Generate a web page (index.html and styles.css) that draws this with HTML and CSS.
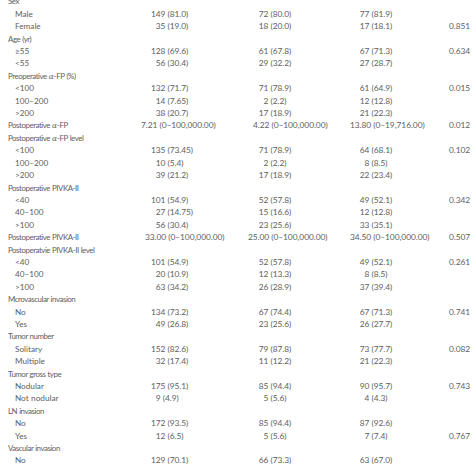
FILE: index.html
```html
<!DOCTYPE html>
<html>
<head>
<meta charset="utf-8">
<link rel="stylesheet" href="styles.css">
</head>
<body>
<div class="table">
  <div class="row"><div class="lab">Sex</div></div>
  <div class="row"><div class="lab sub">Male</div><div class="c2">149 (81.0)</div><div class="c3">&#8199;72 (80.0)</div><div class="c4">&#8199;77 (81.9)</div><div class="c5"></div></div>
  <div class="row"><div class="lab sub">Female</div><div class="c2">&#8199;35 (19.0)</div><div class="c3">&#8199;18 (20.0)</div><div class="c4">&#8199;17 (18.1)</div><div class="c5">0.851</div></div>
  <div class="row"><div class="lab">Age (yr)</div></div>
  <div class="row"><div class="lab sub">≥55</div><div class="c2">128 (69.6)</div><div class="c3">&#8199;61 (67.8)</div><div class="c4">&#8199;67 (71.3)</div><div class="c5">0.634</div></div>
  <div class="row"><div class="lab sub">&lt;55</div><div class="c2">&#8199;56 (30.4)</div><div class="c3">&#8199;29 (32.2)</div><div class="c4">&#8199;27 (28.7)</div><div class="c5"></div></div>
  <div class="row"><div class="lab">Preoperative <span class="gr">α</span>-FP (%)</div></div>
  <div class="row"><div class="lab sub">&lt;100</div><div class="c2">132 (71.7)</div><div class="c3">&#8199;71 (78.9)</div><div class="c4">&#8199;61 (64.9)</div><div class="c5">0.015</div></div>
  <div class="row"><div class="lab sub">100–200</div><div class="c2">&#8199;14 (7.65)</div><div class="c3">&#8199;&#8199;2 (2.2)</div><div class="c4">&#8199;12 (12.8)</div><div class="c5"></div></div>
  <div class="row"><div class="lab sub">&gt;200</div><div class="c2">&#8199;38 (20.7)</div><div class="c3">&#8199;17 (18.9)</div><div class="c4">&#8199;21 (22.3)</div><div class="c5"></div></div>
  <div class="row"><div class="lab">Postoperative <span class="gr">α</span>-FP</div><div class="c2 med-a">7.21 (0–100,000.00)</div><div class="c3 med-b">4.22 (0–100,000.00)</div><div class="c4 med">13.80 (0–19,716.00)</div><div class="c5">0.012</div></div>
  <div class="row"><div class="lab">Postoperative <span class="gr">α</span>-FP level</div></div>
  <div class="row"><div class="lab sub">&lt;100</div><div class="c2">135 (73.45)</div><div class="c3">&#8199;71 (78.9)</div><div class="c4">&#8199;64 (68.1)</div><div class="c5">0.102</div></div>
  <div class="row"><div class="lab sub">100–200</div><div class="c2">&#8199;10 (5.4)</div><div class="c3">&#8199;&#8199;2 (2.2)</div><div class="c4">&#8199;&#8199;8 (8.5)</div><div class="c5"></div></div>
  <div class="row"><div class="lab sub">&gt;200</div><div class="c2">&#8199;39 (21.2)</div><div class="c3">&#8199;17 (18.9)</div><div class="c4">&#8199;22 (23.4)</div><div class="c5"></div></div>
  <div class="row"><div class="lab">Postoperative PIVKA-II</div></div>
  <div class="row"><div class="lab sub">&lt;40</div><div class="c2">101 (54.9)</div><div class="c3">&#8199;52 (57.8)</div><div class="c4">&#8199;49 (52.1)</div><div class="c5">0.342</div></div>
  <div class="row"><div class="lab sub">40–100</div><div class="c2">&#8199;27 (14.75)</div><div class="c3">&#8199;15 (16.6)</div><div class="c4">&#8199;12 (12.8)</div><div class="c5"></div></div>
  <div class="row"><div class="lab sub">&gt;100</div><div class="c2">&#8199;56 (30.4)</div><div class="c3">&#8199;23 (25.6)</div><div class="c4">&#8199;33 (35.1)</div><div class="c5"></div></div>
  <div class="row"><div class="lab">Postoperative PIVKA-II</div><div class="c2 med">33.00 (0–100,000.00)</div><div class="c3 med">25.00 (0–100,000.00)</div><div class="c4 med">34.50 (0–100,000.00)</div><div class="c5">0.507</div></div>
  <div class="row"><div class="lab">Postoperatvie PIVKA-II level</div></div>
  <div class="row"><div class="lab sub">&lt;40</div><div class="c2">101 (54.9)</div><div class="c3">&#8199;52 (57.8)</div><div class="c4">&#8199;49 (52.1)</div><div class="c5">0.261</div></div>
  <div class="row"><div class="lab sub">40–100</div><div class="c2">&#8199;20 (10.9)</div><div class="c3">&#8199;12 (13.3)</div><div class="c4">&#8199;&#8199;8 (8.5)</div><div class="c5"></div></div>
  <div class="row"><div class="lab sub">&gt;100</div><div class="c2">&#8199;63 (34.2)</div><div class="c3">&#8199;26 (28.9)</div><div class="c4">&#8199;37 (39.4)</div><div class="c5"></div></div>
  <div class="row"><div class="lab">Mcrovascular invasion</div></div>
  <div class="row"><div class="lab sub">No</div><div class="c2">134 (73.2)</div><div class="c3">&#8199;67 (74.4)</div><div class="c4">&#8199;67 (71.3)</div><div class="c5">0.741</div></div>
  <div class="row"><div class="lab sub">Yes</div><div class="c2">&#8199;49 (26.8)</div><div class="c3">&#8199;23 (25.6)</div><div class="c4">&#8199;26 (27.7)</div><div class="c5"></div></div>
  <div class="row"><div class="lab">Tumor number</div></div>
  <div class="row"><div class="lab sub">Solitary</div><div class="c2">152 (82.6)</div><div class="c3">&#8199;79 (87.8)</div><div class="c4">&#8199;73 (77.7)</div><div class="c5">0.082</div></div>
  <div class="row"><div class="lab sub">Multiple</div><div class="c2">&#8199;32 (17.4)</div><div class="c3">&#8199;11 (12.2)</div><div class="c4">&#8199;21 (22.3)</div><div class="c5"></div></div>
  <div class="row"><div class="lab">Tumor gross type</div></div>
  <div class="row"><div class="lab sub">Nodular</div><div class="c2">175 (95.1)</div><div class="c3">&#8199;85 (94.4)</div><div class="c4">&#8199;90 (95.7)</div><div class="c5">0.743</div></div>
  <div class="row"><div class="lab sub">Not nodular</div><div class="c2">&#8199;9 (4.9)</div><div class="c3">&#8199;&#8199;5 (5.6)</div><div class="c4">&#8199;&#8199;4 (4.3)</div><div class="c5"></div></div>
  <div class="row"><div class="lab">LN invasion</div></div>
  <div class="row"><div class="lab sub">No</div><div class="c2">172 (93.5)</div><div class="c3">&#8199;85 (94.4)</div><div class="c4">&#8199;87 (92.6)</div><div class="c5"></div></div>
  <div class="row"><div class="lab sub">Yes</div><div class="c2">&#8199;12 (6.5)</div><div class="c3">&#8199;&#8199;5 (5.6)</div><div class="c4">&#8199;&#8199;7 (7.4)</div><div class="c5">0.767</div></div>
  <div class="row"><div class="lab">Vascular invasion</div></div>
  <div class="row"><div class="lab sub">No</div><div class="c2">129 (70.1)</div><div class="c3">&#8199;66 (73.3)</div><div class="c4">&#8199;63 (67.0)</div><div class="c5"></div></div>
</div>
</body>
</html>
```

FILE: styles.css
```css
html, body {
  margin: 0;
  padding: 0;
  background: #ffffff;
  overflow: hidden;
}
body {
  width: 474px;
  height: 474px;
  font-family: "Lato", "Open Sans", sans-serif;
  font-size: 8.4px;
  letter-spacing: -0.05px;
  color: #5e5e5e;
}
.table {
  margin-top: -4.6px;
  padding-left: 8px;
}
.row {
  display: grid;
  grid-template-columns: 133px 103px 101px 100px 1fr;
  height: 12.417px;
  line-height: 12.417px;
  white-space: nowrap;
}
.lab {
  grid-column: 1;
  font-size: 7.9px;
  letter-spacing: -0.45px;
  word-spacing: 0.4px;
}
.sub {
  padding-left: 7px;
  font-size: 8.2px;
  letter-spacing: 0;
}
.c2 { padding-left: 10px; }
.c3 { padding-left: 10px; }
.c4 { padding-left: 10px; }
.c5 { padding-left: 4px; }
.c2.med { padding-left: 4px; }
.c3.med { padding-left: 4px; }
.c4.med { padding-left: 5px; }
.med-a { padding-left: 0; }
.c3.med-b { padding-left: 9px; }
.gr { font-family: "DejaVu Serif", serif; font-style: italic; font-size: 7.6px; letter-spacing: 0; }
```
